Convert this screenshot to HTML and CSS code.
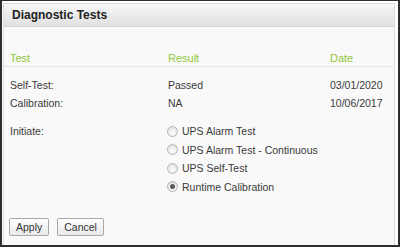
FILE: index.html
```html
<!DOCTYPE html>
<html>
<head>
<meta charset="utf-8">
<link rel="stylesheet" href="styles.css">
</head>
<body>
<div class="frame">
  <div class="panel">
    <div class="panel-head">Diagnostic Tests</div>
    <div class="panel-body">
      <div class="grid thead">
        <div>Test</div><div>Result</div><div>Date</div>
      </div>
      <div class="grid row">
        <div>Self-Test:</div><div>Passed</div><div>03/01/2020</div>
      </div>
      <div class="grid row">
        <div>Calibration:</div><div>NA</div><div>10/06/2017</div>
      </div>
      <div class="grid initiate">
        <div class="label">Initiate:</div>
        <div class="options">
          <label class="opt"><span class="radio"></span>UPS Alarm Test</label>
          <label class="opt"><span class="radio"></span>UPS Alarm Test - Continuous</label>
          <label class="opt"><span class="radio"></span>UPS Self-Test</label>
          <label class="opt"><span class="radio checked"></span>Runtime Calibration</label>
        </div>
      </div>
      <div class="actions">
        <button class="btn">Apply</button>
        <button class="btn">Cancel</button>
      </div>
    </div>
  </div>
</div>
</body>
</html>
```
FILE: styles.css
```css
html, body {
  margin: 0;
  padding: 0;
}
body {
  width: 400px;
  height: 247px;
  font-family: "Liberation Sans", Arial, sans-serif;
  font-size: 10.5px;
  color: #3a3a3a;
  background: #fff;
}
.frame {
  box-sizing: border-box;
  width: 400px;
  height: 247px;
  border: 2px solid #2e2e2e;
  border-top-width: 1px;
  padding: 2px 3px 0 1px;
  background: #fff;
}
.panel {
  box-sizing: border-box;
  height: 100%;
  border: 1px solid #dcdcdc;
  border-bottom: none;
  background: #f9f9f9;
}
.panel-head {
  height: 22px;
  line-height: 22px;
  padding-left: 8px;
  font-size: 12px;
  font-weight: bold;
  color: #222;
  background: linear-gradient(#f6f6f6, #e1e1e1);
  border-bottom: 1px solid #d6d6d6;
}
.panel-body {
  padding: 24px 6px 0 6px;
}
.grid {
  display: grid;
  grid-template-columns: 158px 162px 1fr;
}
.thead {
  color: #92c63c;
  font-size: 11px;
  line-height: 14px;
  padding-bottom: 1px;
  border-bottom: 1px solid #e6e6e6;
  margin-left: -6px;
  margin-right: -6px;
  padding-left: 6px;
  margin-bottom: 9px;
}
.row {
  line-height: 18px;
}
.initiate {
  margin-top: 10px;
}
.label {
  line-height: 18px;
}
.options {
  grid-column: 2 / 4;
  display: flex;
  flex-direction: column;
}
.opt {
  display: flex;
  align-items: center;
  height: 18.5px;
}
.radio {
  box-sizing: border-box;
  width: 11px;
  height: 11px;
  border-radius: 50%;
  border: 1px solid #b5b5b5;
  background: radial-gradient(circle at 50% 65%, #fcfcfc 0, #ececec 55%, #d4d4d4 100%);
  margin-left: -1px;
  margin-right: 4px;
  display: flex;
  align-items: center;
  justify-content: center;
}
.radio.checked::after {
  content: "";
  width: 5px;
  height: 5px;
  border-radius: 50%;
  background: #5a5a5a;
}
.actions {
  display: flex;
  gap: 8px;
  margin-top: 22px;
  margin-left: -1px;
}
.btn {
  box-sizing: border-box;
  height: 18px;
  padding: 0 6px;
  font-family: "Liberation Sans", Arial, sans-serif;
  font-size: 10.5px;
  color: #333;
  border: 1px solid #a8a8a8;
  border-radius: 2px;
  background: linear-gradient(#fefefe, #e9e9e9);
}
```
